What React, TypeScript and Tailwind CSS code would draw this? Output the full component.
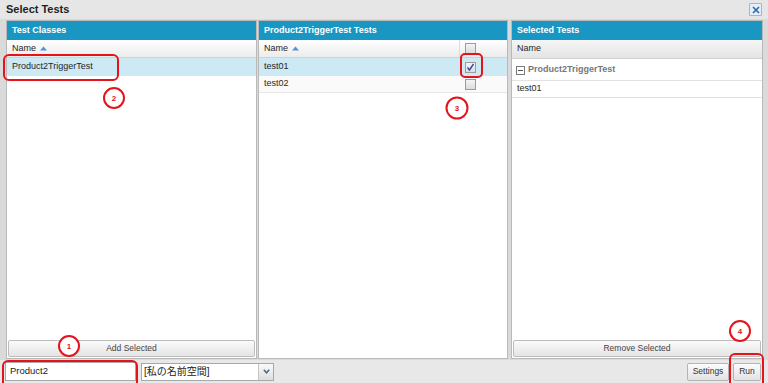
import React from 'react';

const panelBorder = 'border border-[#b9b9b9]';

function SortArrow() {
  return (
    <svg width="7" height="5" viewBox="0 0 7 5" className="ml-[4px] inline-block">
      <path d="M0 4.5 L3.5 0.5 L7 4.5 Z" fill="#5b8fd0" />
    </svg>
  );
}

function Checkbox({ checked }: { checked?: boolean }) {
  return (
    <div className="flex h-[11px] w-[11px] items-center justify-center border border-[#9c9c9c] bg-gradient-to-b from-[#f4f4f4] to-[#dcdcdc]">
      {checked && (
        <svg width="9" height="9" viewBox="0 0 9 9">
          <path d="M1.5 4.5 L3.5 7 L7.5 1" fill="none" stroke="#2c4aa8" strokeWidth="1.4" />
        </svg>
      )}
    </div>
  );
}

function PanelHeader({ title }: { title: string }) {
  return (
    <div className="flex h-[19px] shrink-0 items-center bg-[#1a96c2] px-[5px] text-[9px] font-bold text-white">
      {title}
    </div>
  );
}

function FooterButton({ label }: { label: string }) {
  return (
    <div className="shrink-0 px-[1px] pb-[1px] pt-[1px]">
      <div className="flex h-[17px] items-center justify-center rounded-[2px] border border-[#bdbdbd] bg-gradient-to-b from-[#fbfbfb] to-[#e4e4e4] text-[8.5px] text-[#444]">
        {label}
      </div>
    </div>
  );
}

export default function App() {
  return (
    <div className="relative h-[383px] w-[768px] overflow-hidden bg-[#e6e6e6] font-['Liberation_Sans',Arial,sans-serif] text-[9px] text-[#262626]">
      {/* title bar */}
      <div className="flex h-[19px] items-center justify-between pl-[6px] pr-[6px]">
        <div className="text-[11px] font-bold text-[#1e1e1e]">Select Tests</div>
        <div className="flex h-[13px] w-[13px] items-center justify-center rounded-[1px] border border-[#9fb6cc] bg-[#e3eefa]">
          <svg width="8" height="8" viewBox="0 0 8 8">
            <path d="M1 1 L7 7 M7 1 L1 7" stroke="#2d68a8" strokeWidth="1.6" />
          </svg>
        </div>
      </div>

      {/* panels */}
      <div className="flex h-[341px] bg-[#dadada] pl-[6px] pt-[1px]">
        {/* Test Classes */}
        <div className={`flex h-[339px] w-[251px] flex-col bg-white ${panelBorder}`}>
          <PanelHeader title="Test Classes" />
          <div className="flex h-[18px] shrink-0 items-center border-b border-[#d2d2d2] bg-gradient-to-b from-white to-[#ececec] px-[5px]">
            Name
            <SortArrow />
          </div>
          <div className="flex-1">
            <div className="flex h-[18px] items-center bg-[#cce9f4] px-[5px]">Product2TriggerTest</div>
          </div>
          <FooterButton label="Add Selected" />
        </div>

        {/* Product2TriggerTest Tests */}
        <div className={`ml-[1px] flex h-[339px] w-[250px] flex-col bg-white ${panelBorder}`}>
          <PanelHeader title="Product2TriggerTest Tests" />
          <div className="flex h-[18px] shrink-0 border-b border-[#d2d2d2] bg-gradient-to-b from-white to-[#ececec]">
            <div className="flex flex-1 items-center px-[5px]">
              Name
              <SortArrow />
            </div>
            <div className="flex w-[48px] items-center border-l border-[#dcdcdc] pl-[5px]">
              <Checkbox />
            </div>
          </div>
          <div className="flex-1">
            <div className="flex h-[18px] items-center bg-[#cce9f4]">
              <div className="flex-1 px-[5px]">test01</div>
              <div className="w-[48px] pl-[6px]">
                <Checkbox checked />
              </div>
            </div>
            <div className="flex h-[17px] items-center border-b border-[#e6e6e6] bg-[#fafafa]">
              <div className="flex-1 px-[5px]">test02</div>
              <div className="w-[48px] pl-[6px]">
                <Checkbox />
              </div>
            </div>
          </div>
        </div>

        {/* Selected Tests */}
        <div className={`ml-[3px] flex h-[339px] w-[252px] flex-col bg-white ${panelBorder}`}>
          <PanelHeader title="Selected Tests" />
          <div className="flex h-[19px] shrink-0 items-center border-b border-[#cfcfcf] bg-gradient-to-b from-[#f6f6f6] to-[#e4e4e4] px-[5px]">
            Name
          </div>
          <div className="flex-1">
            <div className="flex h-[22px] items-end border-b border-[#e2e2e2] px-[4px] pb-[4px] font-bold text-[#777]">
              <span className="mb-[1px] mr-[3px] flex h-[9px] w-[9px] items-center justify-center border border-[#7a7a7a] bg-white">
                <span className="h-[1px] w-[5px] bg-[#555]" />
              </span>
              Product2TriggerTest
            </div>
            <div className="flex h-[17px] items-center border-b border-[#e2e2e2] px-[5px]">test01</div>
          </div>
          <FooterButton label="Remove Selected" />
        </div>
      </div>

      {/* bottom toolbar */}
      <div className="flex h-[23px] items-center bg-[#e8e8e8] pl-[5px] pr-[7px]">
        <div className="flex h-[19px] w-[131px] items-center border border-[#a8a8a8] bg-white px-[4px] text-[9.5px] text-[#222]">
          Product2
        </div>
        <div className="ml-[5px] flex h-[18px] w-[133px] items-center border border-[#a8a8a8] bg-white">
          <div className="flex-1 px-[2px] font-['Liberation_Sans','Noto_Sans_CJK_JP',sans-serif] text-[10px] leading-none text-[#222]">
            [私の名前空間]
          </div>
          <div className="flex h-full w-[15px] items-center justify-center border-l border-[#c4c4c4] bg-gradient-to-b from-[#fafafa] to-[#dedede]">
            <svg width="7" height="5" viewBox="0 0 7 5">
              <path d="M0.8 0.8 L3.5 3.8 L6.2 0.8" fill="none" stroke="#4a6785" strokeWidth="1.5" />
            </svg>
          </div>
        </div>
        <div className="flex-1" />
        <div className="flex h-[18px] w-[42px] items-center justify-center rounded-[2px] border border-[#b4b4b4] bg-gradient-to-b from-[#fcfcfc] to-[#e2e2e2] text-[8.5px] text-[#333]">
          Settings
        </div>
        <div className="ml-[4px] flex h-[18px] w-[28px] items-center justify-center rounded-[2px] border border-[#b4b4b4] bg-gradient-to-b from-[#fcfcfc] to-[#e2e2e2] text-[8.5px] text-[#333]">
          Run
        </div>
      </div>

      {/* annotations */}
      <svg className="pointer-events-none absolute left-0 top-0" width="768" height="383" viewBox="0 0 768 383">
        <g fill="none" stroke="#e5131b" strokeWidth="2">
          <rect x="4" y="55" width="114" height="25" rx="5" />
          <circle cx="114" cy="98" r="10" fill="white" />
          <rect x="461" y="54" width="21" height="23" rx="4" />
          <circle cx="457" cy="108" r="10.5" fill="white" />
          <circle cx="69" cy="346" r="10" fill="white" />
          <rect x="3" y="361" width="134" height="26" rx="5" />
          <circle cx="740" cy="331" r="10" fill="white" />
          <rect x="730" y="354" width="33" height="33" rx="5" />
        </g>
        <g fill="#e5131b" fontFamily="Liberation Sans, Arial, sans-serif" fontWeight="bold" fontSize="8" textAnchor="middle">
          <text x="114" y="101">2</text>
          <text x="457" y="111">3</text>
          <text x="69" y="349">1</text>
          <text x="740" y="334">4</text>
        </g>
      </svg>
    </div>
  );
}
